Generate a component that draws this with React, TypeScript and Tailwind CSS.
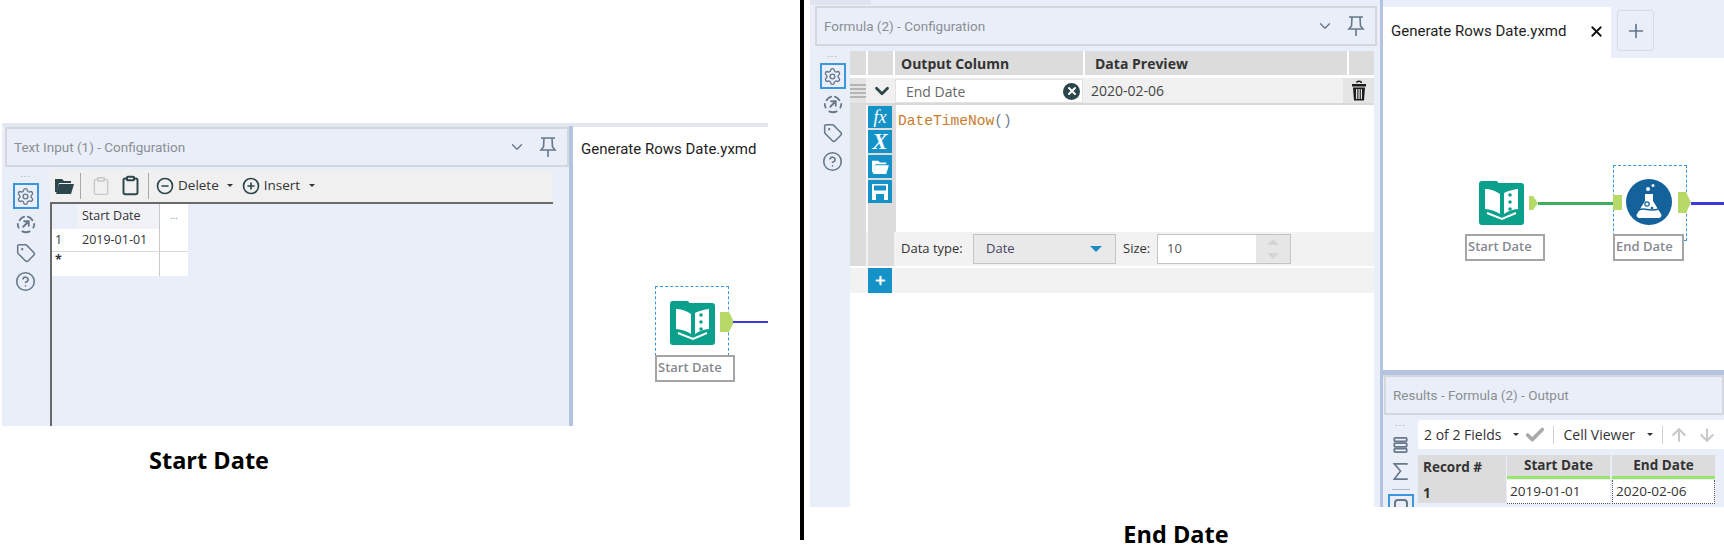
import React from "react";
import { Settings, Tag, CircleHelp, ChevronDown, X, Plus, Clipboard, CircleMinus, CirclePlus, ArrowUp, ArrowDown, Check } from "lucide-react";

const ui = "font-['Roboto',sans-serif]";
const seg = "font-['Open_Sans',sans-serif]";

function Connect({ size = 22 }: { size?: number }) {
  return (
    <svg width={size} height={size} viewBox="0 0 24 24" fill="none" stroke="#66788a" strokeWidth="2" strokeLinecap="round">
      <path d="M5 8a9 9 0 0 1 5-4" />
      <path d="M14 4a9 9 0 0 1 5 4" />
      <path d="M21 12a9 9 0 0 1-1 4" />
      <path d="M16 20a9 9 0 0 1-8 0" />
      <path d="M4 16a9 9 0 0 1-1-4" />
      <path d="M9 15l6-6M10 9h5v5" />
    </svg>
  );
}

function SideIcons() {
  return (
    <div className="flex flex-col items-center">
      <div className="h-[9px] text-[9px] leading-[6px] tracking-[1px] text-[#9aa3ad]">...</div>
      <div className="mt-[3px] w-[26px] h-[26px] flex items-center justify-center border-2 border-[#3b96dd]">
        <Settings size={19} color="#66788a" strokeWidth={1.7} />
      </div>
      <div className="mt-[2px] h-[25px] flex items-center"><Connect /></div>
      <div className="mt-[4px] h-[25px] flex items-center"><Tag size={20} color="#66788a" strokeWidth={1.8} /></div>
      <div className="mt-[4px] h-[25px] flex items-center"><CircleHelp size={21} color="#66788a" strokeWidth={1.8} /></div>
    </div>
  );
}

function PanelHeader({ title }: { title: string }) {
  return (
    <div className={`h-[40px] border-2 border-[#d4d7dc] flex items-center justify-between pl-[7px] pr-[10px] ${ui}`}>
      <span className="text-[13.5px] text-[#8b8f94]">{title}</span>
      <span className="flex items-center gap-[13px]">
        <ChevronDown size={18} color="#66788a" strokeWidth={1.8} />
        <svg width="18" height="22" viewBox="0 0 18 22" fill="none" stroke="#66788a" strokeWidth="1.6">
          <path d="M2 2h14M5 2l-.5 9L2 14h14l-2.500-3L13 2M9 14v7" />
        </svg>
      </span>
    </div>
  );
}

function BookIcon({ size = 45 }: { size?: number }) {
  return (
    <svg width={size} height={size} viewBox="0 0 45 45">
      <path d="M0 4a3 3 0 0 1 3-3h14a3 3 0 0 1 2.500 2h22.500a3 3 0 0 1 3 3v36a3 3 0 0 1-3 3H3a3 3 0 0 1-3-3z" fill="#0ba08b" />
      <path d="M6 9c5 0 10 1.500 15 5v20c-4-3-10-4.500-15-5zM25 13c4-2 9-3.500 14-4v20c-5 .5-10 2-14 5z" fill="#fff" />
      <circle cx="31" cy="15" r="1.800" fill="#0ba08b" />
      <circle cx="31" cy="22" r="1.800" fill="#0ba08b" />
      <circle cx="31" cy="29" r="1.800" fill="#0ba08b" />
      <path d="M8 33l15 6 14-6" fill="none" stroke="#fff" strokeWidth="2" />
    </svg>
  );
}

function FlaskIcon() {
  return (
    <svg width="46" height="46" viewBox="0 0 46 46">
      <circle cx="23" cy="23" r="23" fill="#13629b" />
      <path d="M19 15h8v7l8 13c1 2 0 4-3 4H14c-3 0-4-2-3-4l8-13z" fill="#fff" />
      <path d="M13 31c6-3 9 2 20-1" fill="none" stroke="#13629b" strokeWidth="1.500" />
      <circle cx="21" cy="25" r="2.200" fill="none" stroke="#13629b" strokeWidth="1.200" />
      <circle cx="26" cy="29" r="1.300" fill="#13629b" />
      <circle cx="22" cy="10" r="2" fill="#fff" />
      <circle cx="27" cy="6.500" r="1.500" fill="#fff" />
    </svg>
  );
}

function OutAnchor({ w, h }: { w: number; h: number }) {
  return (
    <svg width={w} height={h} viewBox={`0 0 ${w} ${h}`}>
      <path d={`M0 0H${w - 5}L${w} ${h / 2}L${w - 5} ${h}H0z`} fill="#b7d968" />
    </svg>
  );
}

function NodeLabel({ text, className }: { text: string; className: string }) {
  return (
    <div className={`absolute h-[27px] border-2 border-[#a5a5a5] bg-white pl-[1px] text-[13px] font-semibold leading-[20px] text-[#85898f] font-['Open_Sans',sans-serif] ${className}`}>
      {text}
    </div>
  );
}

function LeftShot() {
  return (
    <div className="mt-[123px] ml-[2px] h-[303px] w-[766px] flex bg-[#e9eef8] border-t-4 border-[#e2e6ee]">
      <div className="w-[567px] pl-[3px] pr-[0px]">
        <PanelHeader title="Text Input (1) - Configuration" />
        <div className="flex mt-[3px]">
          <div className="w-[45px] pt-[1px] pr-[4px]"><SideIcons /></div>
          <div className="w-[503px] h-[256px] flex flex-col">
            <div className={`h-[32px] bg-[#f0f0f0] flex items-center pl-[4px] pb-[1px] text-[13.5px] text-[#333] ${seg}`}>
              <svg width="20" height="18" viewBox="0 0 20 18" fill="#2c474c"><path d="M1 2h7l2 2h7v2H5L3 15H1z" /><path d="M5 7h15l-3 10H2z" /></svg>
              <div className="w-[1px] h-[26px] bg-[#a9a9a9] ml-[6px] mr-[10px]" />
              <Clipboard size={20} color="#c6c9c9" strokeWidth={1.7} />
              <Clipboard size={21} color="#2c474c" strokeWidth={2.200} className="ml-[9px]" />
              <div className="w-[1px] h-[26px] bg-[#a9a9a9] ml-[7px] mr-[7px]" />
              <CircleMinus size={18} color="#2c474c" strokeWidth={2.200} />
              <span className="ml-[4px]">Delete</span>
              <span className="ml-[8px] border-x-[3px] border-t-[3px] border-x-transparent border-t-[#333]" />
              <CirclePlus size={18} color="#2c474c" strokeWidth={2.200} className="ml-[9px]" />
              <span className="ml-[4px]">Insert</span>
              <span className="ml-[9px] border-x-[3px] border-t-[3px] border-x-transparent border-t-[#333]" />
            </div>
            <div className={`flex-1 border-t-2 border-l-2 border-[#6a6a6a] ${seg}`}>
              <div className="w-[136px] bg-white text-[12.5px] text-[#333]">
                <div className="flex h-[25px] leading-[24px]">
                  <div className="w-[25px] bg-[#e9eef8]" />
                  <div className="w-[83px] pl-[5px] bg-[#f0f2f7] border-r border-[#c9c9c9]">Start Date</div>
                  <div className="flex-1 text-center text-[#3b7fc4] text-[9px]">...</div>
                </div>
                <div className="flex h-[23px] leading-[22px] border-b border-[#d9d9d9]">
                  <div className="w-[25px] pl-[3px]">1</div>
                  <div className="w-[83px] pl-[5px] border-r border-[#c9c9c9]">2019-01-01</div>
                </div>
                <div className="flex h-[24px] leading-[16px]">
                  <div className="w-[25px] pl-[3px] font-bold">*</div>
                  <div className="w-[83px] border-r border-[#c9c9c9]" />
                </div>
              </div>
            </div>
          </div>
        </div>
      </div>
      <div className="w-[4px] bg-[#b4c4e0] -mt-[1px]" />
      <div className="flex-1 relative bg-white overflow-hidden">
        <div className={`pl-[8px] pt-[11px] text-[15px] text-[#1e1e1e] ${ui}`}>Generate Rows Date.yxmd</div>
        <div className="absolute left-[82px] top-[159px] w-[74px] h-[70px] border border-dashed border-[#3b96dd]" />
        <div className="absolute left-[97px] top-[173px]"><BookIcon /></div>
        <div className="absolute left-[147px] top-[185px]"><OutAnchor w={14} h={20} /></div>
        <div className="absolute left-[160px] top-[194px] right-0 h-[2px] bg-[#3a3ae0]" />
        <NodeLabel text="Start Date" className="left-[82px] top-[228px] w-[80px]" />
      </div>
    </div>
  );
}

function BlueBtn({ children, h = 23 }: { children: React.ReactNode; h?: number }) {
  return <div style={{ height: h }} className="w-[24px] mb-[2px] bg-[#1593c8] flex items-center justify-center text-white">{children}</div>;
}

function FormulaPane() {
  return (
    <div className={`w-[524px] h-[456px] bg-white flex flex-col ${seg}`}>
      <div className="flex h-[24px] gap-[2px] font-bold text-[14px] text-[#333] leading-[26px]">
        <div className="w-[16px] bg-[#dcdcdc]" />
        <div className="w-[25px] bg-[#dcdcdc]" />
        <div className="w-[188px] bg-[#dcdcdc] pl-[6px]">Output Column</div>
        <div className="w-[262px] bg-[#dcdcdc] pl-[10px]">Data Preview</div>
        <div className="flex-1 bg-[#dcdcdc]" />
      </div>
      <div className="flex h-[27px] mt-[3px] bg-[#f0f0f0] border-b-2 border-[#d9d9d9] text-[14px] text-[#444]">
        <div className="w-[16px] flex flex-col gap-[2px] justify-center bg-[#e4e4e4]">
          <div className="h-[2px] bg-[#b5b5b5]" /><div className="h-[2px] bg-[#b5b5b5]" /><div className="h-[2px] bg-[#b5b5b5]" /><div className="h-[2px] bg-[#b5b5b5]" />
        </div>
        <div className="w-[27px] ml-[2px] flex items-center justify-center"><ChevronDown size={22} color="#2c474c" strokeWidth={3} /></div>
        <div className="w-[188px] h-[24px] mt-[1px] bg-white border border-[#e2e2e2] pl-[10px] flex items-center justify-between pr-[2px] text-[#666]">
          <span>End Date</span>
          <span className="w-[17px] h-[17px] rounded-full bg-[#2c474c] flex items-center justify-center"><X size={12} color="#fff" strokeWidth={4} /></span>
        </div>
        <div className="w-[260px] pl-[8px] leading-[26px]">2020-02-06</div>
        <div className="flex-1 flex items-center justify-center bg-[#e4e4e4]">
          <svg width="16" height="21" viewBox="0 0 16 21" fill="#1c1c1c">
            <path d="M5 2.500a3 2 0 0 1 6 0V3h-1.300a1.700 1 0 0 0-3.400 0V3z" />
            <path d="M1 4h14v2.500H1zM2 7.500h12l-1 13H3zM5 9v10h1.300V9zM7.400 9v10h1.300V9zM9.800 9v10H11V9z" fillRule="evenodd" />
          </svg>
        </div>
      </div>
      <div className="flex h-[127px]">
        <div className="w-[16px] bg-[#dcdcdc]" />
        <div className="w-[28px] ml-[2px] pt-[1px] bg-[#dcdcdc] flex flex-col">
          <BlueBtn h={22}><span className="font-['Liberation_Serif',serif] italic text-[18px] leading-none">fx</span></BlueBtn>
          <BlueBtn><span className="font-['Liberation_Serif',serif] italic font-bold text-[23px] leading-none">X</span></BlueBtn>
          <BlueBtn>
            <svg width="18" height="16" viewBox="0 0 20 18" fill="#fff"><path d="M1 2h7l2 2h7v2H5L3 15H1z" /><path d="M5 7h15l-3 10H2z" /></svg>
          </BlueBtn>
          <BlueBtn>
            <svg width="18" height="18" viewBox="0 0 18 18"><path d="M1 1h16v16H1z" fill="#fff" /><path d="M3 2.500h12v5H3z" fill="#1593c8" /><path d="M5 11h8v6H5z" fill="#1593c8" /></svg>
          </BlueBtn>
        </div>
        <div className="flex-1 pl-[2px] pt-[6px] font-['Liberation_Mono',monospace] text-[14.6px] text-[#c77d2e]">
          DateTimeNow<span className="text-[#6f7f8f]">()</span>
        </div>
      </div>
      <div className="flex h-[34px] bg-[#f2f2f2] text-[13px] text-[#333]">
        <div className="w-[16px] bg-[#dcdcdc]" />
        <div className="w-[26px] ml-[2px] bg-[#dcdcdc]" />
        <div className="pl-[7px] flex items-center">
          <span className="w-[72px]">Data type:</span>
          <div className="w-[143px] h-[30px] border border-[#c4c4c4] bg-[#e9e9e9] pl-[12px] flex items-center justify-between pr-[13px] text-[#4a4460]">
            <span>Date</span>
            <span className="border-x-[6px] border-t-[6px] border-x-transparent border-t-[#1a8cc4]" />
          </div>
          <span className="ml-[7px] w-[34px]">Size:</span>
          <div className="w-[134px] h-[30px] border border-[#c4c4c4] bg-white flex items-center text-[#555]">
            <span className="w-[98px] pl-[9px]">10</span>
            <div className="flex-1 h-full bg-[#e6e6e6] flex flex-col items-center justify-around">
              <span className="border-x-[6px] border-b-[6px] border-x-transparent border-b-[#d4d4d4]" />
              <span className="border-x-[6px] border-t-[6px] border-x-transparent border-t-[#d4d4d4]" />
            </div>
          </div>
        </div>
      </div>
      <div className="h-[25px] mt-[2px] bg-[#f2f2f2] flex">
        <div className="w-[24px] ml-[18px] bg-[#1593c8] flex items-center justify-center"><Plus size={13} color="#fff" strokeWidth={4} /></div>
      </div>
    </div>
  );
}

function ResultsPanel() {
  return (
    <div className="h-[137px] bg-[#e9eef8] overflow-hidden">
      <div className="h-[5px] bg-[#b4c4e0]" />
      <div className="h-[2px] bg-[#d4d7dc]" />
      <div className="h-[38px] border-x-2 border-b-2 border-[#d4d7dc] flex items-center pl-[7px] ml-[1px]">
        <span className={`text-[13.5px] text-[#8b8f94] ${ui}`}>Results - Formula (2) - Output</span>
      </div>
      <div className="flex mt-[5px]">
        <div className="w-[35px] flex flex-col items-center shrink-0">
          <div className="h-[9px] text-[9px] leading-[6px] tracking-[1px] text-[#9aa3ad]">...</div>
          <svg className="mt-[8px]" width="15" height="16" viewBox="0 0 16 18" fill="none" stroke="#66788a" strokeWidth="2"><rect x="1" y="1" width="14" height="4" rx="1" /><rect x="1" y="7" width="14" height="4" rx="1" /><rect x="1" y="13" width="14" height="4" rx="1" /></svg>
          <svg className="mt-[10px]" width="16" height="17" viewBox="0 0 17 19" fill="none" stroke="#66788a" strokeWidth="1.800"><path d="M16 1H1l7 8-7 9h15" /></svg>
          <div className="mt-[9px] w-[18px] h-[1px] bg-[#b0b8c4]" />
          <div className="mt-[4px] w-[26px] h-[30px] border-2 border-[#3b96dd] flex justify-center pt-[3px]">
            <div className="w-[14px] h-[14px] border-2 border-[#66788a] rounded-sm" />
          </div>
        </div>
        <div className={`flex-1 ${seg}`}>
          <div className="h-[29px] bg-white rounded-l-[3px] flex items-center pl-[6px] text-[14px] text-[#333]">
            <span>2 of 2 Fields</span>
            <span className="ml-[12px] border-x-[3px] border-t-[3px] border-x-transparent border-t-[#333]" />
            <Check size={22} color="#a9a9a9" strokeWidth={4} className="ml-[5px]" />
            <div className="w-[1px] h-[18px] bg-[#cfcfcf] ml-[7px] mr-[9px]" />
            <span>Cell Viewer</span>
            <span className="ml-[12px] border-x-[3px] border-t-[3px] border-x-transparent border-t-[#333]" />
            <div className="w-[1px] h-[18px] bg-[#cfcfcf] ml-[9px] mr-[6px]" />
            <ArrowUp size={20} color="#c9c9c9" strokeWidth={2.500} />
            <ArrowDown size={20} color="#c9c9c9" strokeWidth={2.500} className="ml-[8px]" />
          </div>
          <div className="mt-[6px] flex text-[13.500px] text-[#333]">
            <div className="w-[88px] h-[48px] bg-[#dcdcdc] font-bold pl-[5px] leading-[24px]">
              <div>Record #</div>
              <div className="mt-[2px]">1</div>
            </div>
            <div className="w-[103px] ml-[1px]">
              <div className="h-[24px] bg-[#dcdcdc] border-b-[3px] border-[#9be56f] font-bold text-center leading-[21px]">Start Date</div>
              <div className="h-[24px] bg-white pl-[3px] mt-[1px] border-b border-dotted border-[#555] leading-[22px]">2019-01-01</div>
            </div>
            <div className="w-[103px] ml-[2px]">
              <div className="h-[24px] bg-[#dcdcdc] border-b-[3px] border-[#9be56f] font-bold text-center leading-[21px]">End Date</div>
              <div className="h-[24px] bg-white pl-[3px] mt-[1px] border-x border-b border-dotted border-[#555] leading-[22px]">2020-02-06</div>
            </div>
          </div>
        </div>
      </div>
    </div>
  );
}

function RightCanvas() {
  return (
    <div className="h-[312px] relative bg-white overflow-hidden">
      <div className="absolute left-[96px] top-[122px]"><BookIcon /></div>
      <div className="absolute left-[146px] top-[138px]"><OutAnchor w={9} h={14} /></div>
      <div className="absolute left-[155px] top-[144px] w-[80px] h-[3px] bg-[#3fae62]" />
      <div className="absolute left-[230px] top-[107px] w-[74px] h-[76px] border border-dashed border-[#3b96dd]" />
      <div className="absolute left-[230px] top-[137px] w-[9px] h-[15px] bg-[#b7d968]" />
      <div className="absolute left-[243px] top-[121px]"><FlaskIcon /></div>
      <div className="absolute left-[295px] top-[134px]"><OutAnchor w={13} h={21} /></div>
      <div className="absolute left-[308px] top-[144px] right-0 h-[3px] bg-[#3a3ae0]" />
      <NodeLabel text="Start Date" className="left-[82px] top-[176px] w-[80px]" />
      <NodeLabel text="End Date" className="left-[230px] top-[176px] w-[71px]" />
    </div>
  );
}

function RightShot() {
  return (
    <div className="h-[507px] flex bg-[#e9eef8]">
      <div className="w-[570px] pl-[5px]">
        <div className="h-[6px] -ml-[5px]"><div className="h-[5px] w-[61px] bg-[#dfe4ee]" /></div>
        <div className="w-[562px]"><PanelHeader title="Formula (2) - Configuration" /></div>
        <div className="flex mt-[5px]">
          <div className="w-[35px]"><SideIcons /></div>
          <FormulaPane />
        </div>
      </div>
      <div className="w-[3px] bg-[#b4c4e0]" />
      <div className="flex-1 flex flex-col min-w-0">
        <div className="h-[58px] flex">
          <div className="w-[228px] mt-[7px] bg-white flex items-start justify-between pl-[8px] pr-[6px] pt-[13px]">
            <span className={`text-[15px] text-[#1e1e1e] ${ui}`}>Generate Rows Date.yxmd</span>
            <X size={17} color="#111" strokeWidth={2.500} className="mt-[3px]" />
          </div>
          <div className="ml-[6px] mt-[10px] w-[37px] h-[41px] border border-[#d4dbe8] rounded-[3px] flex items-center justify-center">
            <Plus size={22} color="#66788a" strokeWidth={1.800} />
          </div>
        </div>
        <RightCanvas />
        <ResultsPanel />
      </div>
    </div>
  );
}

export default function App() {
  return (
    <div className="w-[1724px] h-[550px] bg-white flex overflow-hidden">
      <div className="w-[800px] shrink-0 flex flex-col">
        <LeftShot />
        <div className="w-[418px] mt-[17px] text-center text-[23.5px] font-bold text-black font-['Open_Sans',sans-serif]">Start Date</div>
      </div>
      <div className="w-[4px] h-[540px] bg-black shrink-0" />
      <div className="ml-[6px] flex-1 flex flex-col min-w-0">
        <RightShot />
        <div className="mt-[11px] ml-[246px] w-[240px] text-center text-[23.5px] leading-[32px] font-bold text-black font-['Open_Sans',sans-serif]">End Date</div>
      </div>
    </div>
  );
}
